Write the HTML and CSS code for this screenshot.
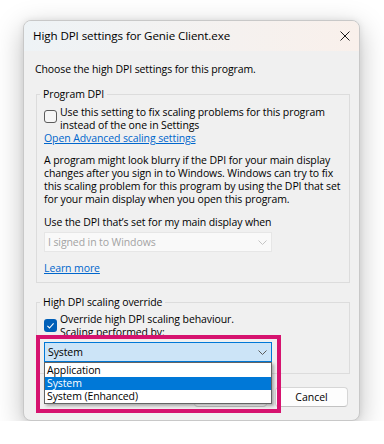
FILE: index.html
```html
<!DOCTYPE html>
<html lang="en">
<head>
<meta charset="utf-8">
<title>High DPI settings</title>
<link rel="stylesheet" href="styles.css">
</head>
<body>
<div class="window">
  <div class="titlebar">
    <span class="title">High DPI settings for Genie Client.exe</span>
    <svg class="close" width="10" height="10" viewBox="0 0 10 10"><path d="M0.5 0.5 L9.5 9.5 M9.5 0.5 L0.5 9.5" stroke="#1a1a1a" stroke-width="1" fill="none"/></svg>
  </div>
  <div class="content">
    <p class="intro">Choose the high DPI settings for this program.</p>
    <fieldset class="group g1">
      <legend>Program DPI</legend>
      <div class="check">
        <span class="box unchecked"></span>
        <span>Use this setting to fix scaling problems for this program<br>instead of the one in Settings</span>
      </div>
      <a class="link">Open Advanced scaling settings</a>
      <p class="para">A program might look blurry if the DPI for your main display<br>changes after you sign in to Windows. Windows can try to fix<br>this scaling problem for this program by using the DPI that set<br>for your main display when you open this program.</p>
      <p class="label">Use the DPI that’s set for my main display when</p>
      <div class="select disabled">
        <span>I signed in to Windows</span>
        <svg width="9" height="5" viewBox="0 0 9 5"><path d="M0.5 0.5 L4.5 4.5 L8.5 0.5" fill="none" stroke="#c4c4c4"/></svg>
      </div>
      <a class="link learn">Learn more</a>
    </fieldset>
    <fieldset class="group g2">
      <legend>High DPI scaling override</legend>
      <div class="check">
        <span class="box checked"><svg width="13" height="13" viewBox="0 0 13 13"><path d="M3.4 6.9 L5.5 9 L9.6 4.4" fill="none" stroke="#fff" stroke-width="1.1"/></svg></span>
        <span>Override high DPI scaling behaviour.<br>Scaling performed by:</span>
      </div>
      <div class="combo">
        <div class="select focused">
          <span>System</span>
          <svg width="9" height="5" viewBox="0 0 9 5"><path d="M0.5 0.5 L4.5 4.5 L8.5 0.5" fill="none" stroke="#5a5a5a"/></svg>
        </div>
        <ul class="dropdown">
          <li class="first">Application</li>
          <li class="sel">System</li>
          <li>System (Enhanced)</li>
        </ul>
      </div>
    </fieldset>
    <div class="buttons">
      <button class="btn">OK</button>
      <button class="btn">Cancel</button>
    </div>
  </div>
  <div class="highlight"></div>
</div>
</body>
</html>
```
FILE: styles.css
```css
body {
  margin: 0;
  background: #ffffff;
  font-family: "Open Sans", "Noto Sans", sans-serif;
  font-size: 10.5px;
  letter-spacing: -0.1px;
  color: #000;
}

.window {
  position: relative;
  margin: 20px 0 0 23px;
  width: 337px;
  box-sizing: border-box;
  border: 1px solid #c8c8c8;
  border-radius: 8px;
  background: #f0f0f0;
  box-shadow: 0 8px 28px rgba(0, 0, 0, 0.26), 0 0 6px rgba(0, 0, 0, 0.08);
}

.titlebar {
  height: 30px;
  display: flex;
  align-items: center;
  justify-content: space-between;
  padding: 0 9px;
  background: linear-gradient(90deg, #eef3f6, #f9f0eb);
  border-radius: 7px 7px 0 0;
}

.title {
  font-size: 11.6px;
  line-height: 14px;
  white-space: nowrap;
}

.content {
  padding: 12px 9px 13px 12px;
}

.intro {
  margin: 0 0 12px -1px;
  line-height: 13px;
}

.group {
  margin: 0;
  padding: 5px 8px 7px 7px;
  border: 1px solid #dcdcdc;
  min-width: 0;
}

.group legend {
  padding: 0 3px;
  margin-left: -4px;
  line-height: 13px;
}

.g2 {
  margin-top: 13px;
  padding-top: 4px;
  padding-bottom: 11px;
}

.check {
  display: flex;
  gap: 3px;
  line-height: 13px;
  white-space: nowrap;
}

.box {
  flex: none;
  width: 13px;
  height: 13px;
  box-sizing: border-box;
  border-radius: 3px;
  margin-top: 4px;
}

.box.unchecked {
  border: 1px solid #5c5c5c;
  background: #f6f6f6;
}

.box.checked {
  margin-top: 6px;
  background: #005fb8;
}

.box.checked svg {
  display: block;
}

.link {
  display: block;
  width: max-content;
  color: #0066cc;
  text-decoration: underline;
  line-height: 13px;
}

.para {
  margin: 9px 0 0;
  line-height: 13px;
  white-space: nowrap;
}

.label {
  margin: 10px 0 0;
  line-height: 13px;
}

.select {
  width: 228px;
  height: 20px;
  box-sizing: border-box;
  display: flex;
  align-items: center;
  justify-content: space-between;
  padding: 0 4px 0 3px;
  line-height: 13px;
}

.select svg {
  display: block;
}

.select.disabled {
  margin-top: 3px;
  background: #f9f9f9;
  border: 1px solid #e6e6e6;
  color: #a3a3a3;
}

.learn {
  margin-top: 10px;
}

.combo {
  position: relative;
  margin-top: 3px;
  width: 228px;
}

.select.focused {
  background: #cce4f7;
  border: 1px solid #0078d7;
}

.dropdown {
  position: absolute;
  top: 100%;
  left: 0;
  z-index: 2;
  width: 228px;
  box-sizing: border-box;
  margin: 0;
  padding: 0;
  list-style: none;
  background: #fff;
  border: 1px solid #646464;
  box-shadow: 2px 2px 3px rgba(0, 0, 0, 0.3);
}

.dropdown li {
  line-height: 13px;
  padding-left: 2px;
}

.dropdown li.first {
  padding-top: 1px;
}

.dropdown li.sel {
  background: #0078d7;
  color: #fff;
}

.buttons {
  display: flex;
  justify-content: flex-end;
  gap: 8px;
  margin-top: 13px;
  padding-right: 2px;
}

.btn {
  width: 73px;
  height: 20px;
  box-sizing: border-box;
  padding: 0;
  background: #fdfdfd;
  border: 1px solid #d6d6d6;
  border-bottom-color: #c2c2c2;
  border-radius: 4px;
  font: inherit;
  color: #000;
}

.highlight {
  position: absolute;
  left: 12px;
  top: 314px;
  z-index: 3;
  width: 245px;
  height: 78px;
  box-sizing: border-box;
  border: 4px solid #d6136f;
  pointer-events: none;
}
```
